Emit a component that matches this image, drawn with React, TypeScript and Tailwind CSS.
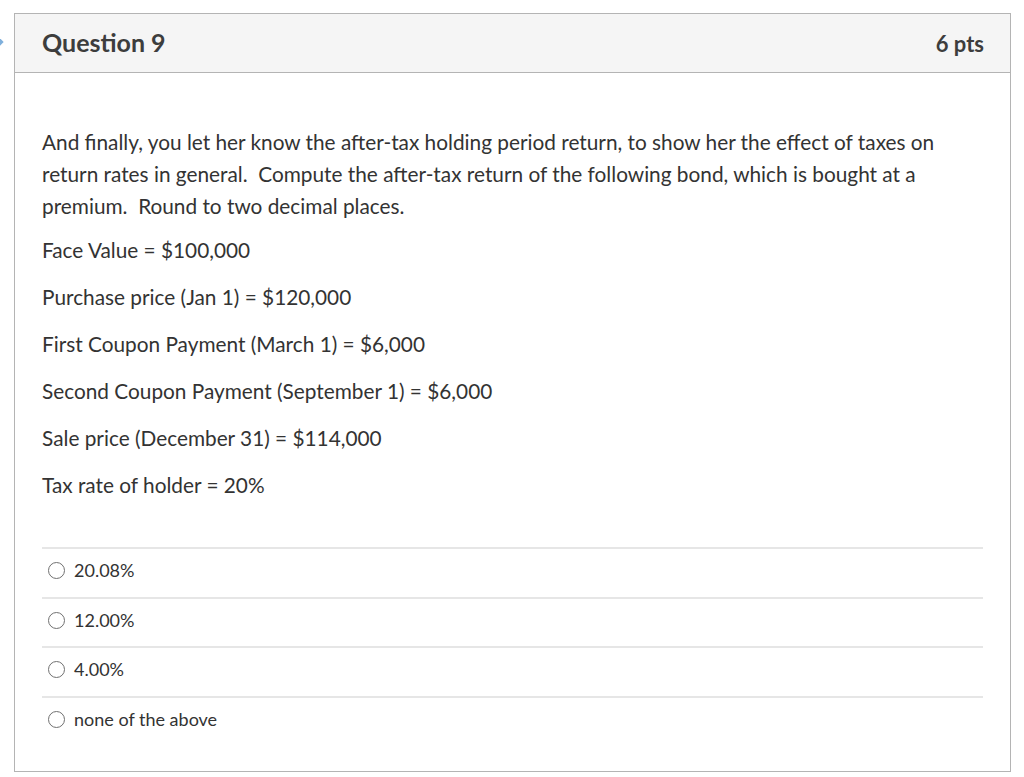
export default function App() {
  const lines = [
    "Face Value = $100,000",
    "Purchase price (Jan 1) = $120,000",
    "First Coupon Payment (March 1) = $6,000",
    "Second Coupon Payment (September 1) = $6,000",
    "Sale price (December 31) = $114,000",
    "Tax rate of holder = 20%",
  ];
  const answers = ["20.08%", "12.00%", "4.00%", "none of the above"];

  return (
    <div
      className="relative h-[777px] w-[1024px] overflow-hidden bg-white pt-[13px] pl-[14px] text-[#333]"
      style={{ fontFamily: "Lato, 'Open Sans', sans-serif" }}
    >
      {/* current question marker */}
      <div className="absolute left-[-6px] top-[38px] h-[8px] w-[8px] rotate-45 bg-[#7fb0dc]" />

      <div className="flex h-[759px] w-[997px] flex-col border border-[#b4b4b4]">
        {/* Header */}
        <div className="flex h-[59px] shrink-0 items-center justify-between border-b border-[#b4b4b4] bg-[#f5f5f5] pl-[27px] pr-[26px]">
          <div className="text-[25px] font-bold text-[#3d3d3d]">Question 9</div>
          <div className="text-[22px] font-bold text-[#3d3d3d]">6 pts</div>
        </div>

        {/* Body */}
        <div className="flex flex-1 flex-col px-[27px] pt-[53px]">
          <p className="text-[20.8px] leading-[32px]">
            And finally, you let her know the after-tax holding period return, to show her the effect of taxes on
            <br />
            return rates in general.&nbsp; Compute the after-tax return of the following bond, which is bought at a
            <br />
            premium.&nbsp; Round to two decimal places.
          </p>
          <div className="mt-[12px] flex flex-col gap-[15px]">
            {lines.map((l) => (
              <p key={l} className="text-[20.8px] leading-[32px]">
                {l}
              </p>
            ))}
          </div>

          <div className="mt-[46px]">
            {answers.map((a) => (
              <div
                key={a}
                className="flex h-[49.5px] items-center gap-[9px] border-t-2 border-[#e6e6e6] pb-[4px] pl-[6px]"
              >
                <span className="h-[17px] w-[17px] rounded-full border border-[#707070] bg-white" />
                <span className="text-[18px]">{a}</span>
              </div>
            ))}
          </div>
        </div>
      </div>
    </div>
  );
}
